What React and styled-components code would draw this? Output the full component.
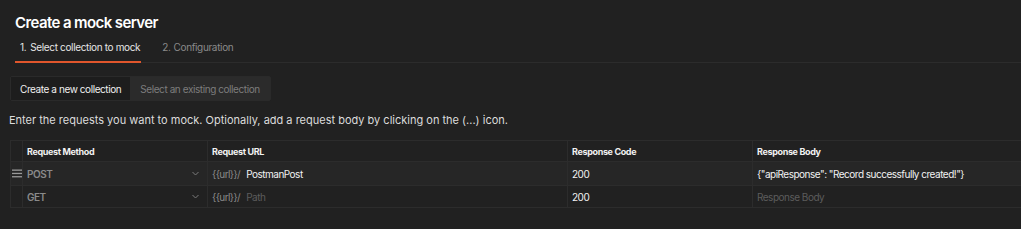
import React from "react";
import styled, { createGlobalStyle } from "styled-components";

const Global = createGlobalStyle`
  html, body { margin: 0; padding: 0; background: #212121; overflow: hidden; }
  body { font-family: Inter, "Noto Sans", "Liberation Sans", sans-serif; color: #e6e6e6; }
  * { box-sizing: border-box; }
`;

const Page = styled.div`
  padding: 13px 0 0 10px;
  width: 1021px;
  height: 229px;
`;

const Title = styled.h1`
  margin: 0 0 0 5px;
  font-size: 15px;
  line-height: 20px;
  font-weight: 600;
  letter-spacing: -0.6px;
  color: #ffffff;
`;

const TabBar = styled.div`
  display: flex;
  gap: 16px;
  margin-left: 5px;
  border-bottom: 1px solid #2c2c2c;
`;

const Tab = styled.div`
  display: flex;
  padding: 7px 1px 7px 5px;
  font-size: 10px;
  line-height: 14px;
  letter-spacing: -0.35px;
  color: ${(p) => (p.$active ? "#e6e6e6" : "#8a8a8a")};
  border-bottom: 2px solid ${(p) => (p.$active ? "#e0562c" : "transparent")};
  margin-bottom: -1px;
`;

const TabNum = styled.span`
  margin-right: ${(p) => p.$gap}px;
`;

const Segmented = styled.div`
  display: inline-flex;
  margin-top: 13px;
  border: 1px solid #2a2a2a;
  border-radius: 2px;
  background: #1d1d1d;
`;

const SegButton = styled.div`
  height: 23px;
  display: flex;
  align-items: center;
  padding: 0 ${(p) => (p.$active ? 9 : 10)}px;
  font-size: 10px;
  letter-spacing: -0.42px;
  color: ${(p) => (p.$active ? "#f0f0f0" : "#7d7d7d")};
  background: ${(p) => (p.$active ? "#1d1d1d" : "#2b2b2b")};
`;

const Description = styled.p`
  margin: 12px 0 0 -1px;
  font-size: 11px;
  line-height: 14px;
  color: #dcdcdc;
`;

const Table = styled.div`
  margin-top: 13px;
  display: grid;
  grid-template-columns: 12px 185px 360px 185px 1fr;
  border-top: 1px solid #2c2c2c;
  border-left: 1px solid #2c2c2c;
`;

const Row = styled.div`
  display: contents;
`;

const Cell = styled.div`
  height: ${(p) => p.$h || 22}px;
  display: flex;
  align-items: center;
  padding: 0 4px;
  font-size: ${(p) => (p.$head ? "9px" : "10px")};
  letter-spacing: ${(p) => (p.$head ? "-0.35px" : "-0.5px")};
  font-weight: ${(p) => (p.$head ? 700 : p.$method ? 600 : 400)};
  color: ${(p) => (p.$muted ? "#8a8a8a" : p.$placeholder ? "#5c5c5c" : "#f2f2f2")};
  background: ${(p) => (p.$hl ? "#262626" : "#212121")};
  border-bottom: 1px solid #2c2c2c;
  border-right: ${(p) => (p.$last ? "none" : "1px solid #2c2c2c")};
  white-space: nowrap;
  overflow: hidden;
`;

const HandleCell = styled(Cell)`
  padding: 0;
  justify-content: center;
`;

const MethodCell = styled(Cell)`
  justify-content: space-between;
  padding-right: 8px;
`;

const UrlPrefix = styled.span`
  color: #8a8a8a;
  margin-right: 6px;
  letter-spacing: -0.6px;
`;

const UrlValue = styled.span`
  color: ${(p) => (p.$placeholder ? "#5c5c5c" : "#f2f2f2")};
`;

const Chevron = () => (
  <svg width="7" height="5" viewBox="0 0 7 5" fill="none">
    <path d="M0.5 1 L3.5 4 L6.5 1" stroke="#7a7a7a" strokeWidth="1" />
  </svg>
);

const Handle = () => (
  <svg width="10" height="9" viewBox="0 0 10 9">
    <rect x="0" y="0.5" width="10" height="1.3" fill="#9a9a9a" />
    <rect x="0" y="3.8" width="10" height="1.3" fill="#9a9a9a" />
    <rect x="0" y="7.1" width="10" height="1.3" fill="#9a9a9a" />
  </svg>
);

const rows = [
  { method: "POST", path: "PostmanPost", code: "200", body: '{"apiResponse": "Record successfully created!"}', hl: true, h: 24 },
  { method: "GET", path: "", code: "200", body: "", hl: false, h: 22 },
];

export default function App() {
  return (
    <>
      <Global />
      <Page>
        <Title>Create a mock server</Title>
        <TabBar>
          <Tab $active>
            <TabNum $gap={4}>1.</TabNum>Select collection to mock
          </Tab>
          <Tab>
            <TabNum $gap={3}>2.</TabNum>Configuration
          </Tab>
        </TabBar>
        <Segmented>
          <SegButton $active>Create a new collection</SegButton>
          <SegButton>Select an existing collection</SegButton>
        </Segmented>
        <Description>
          Enter the requests you want to mock. Optionally, add a request body by clicking on the (...) icon.
        </Description>
        <Table>
          <Row>
            <HandleCell $head $h={21} />
            <Cell $head $h={21}>Request Method</Cell>
            <Cell $head $h={21}>Request URL</Cell>
            <Cell $head $h={21}>Response Code</Cell>
            <Cell $head $h={21} $last>Response Body</Cell>
          </Row>
          {rows.map((r) => (
            <Row key={r.method}>
              <HandleCell $hl={r.hl} $h={r.h}>{r.hl && <Handle />}</HandleCell>
              <MethodCell $hl={r.hl} $h={r.h} $muted $method>
                {r.method}
                <Chevron />
              </MethodCell>
              <Cell $hl={r.hl} $h={r.h}>
                <UrlPrefix>{"{{url}}/"}</UrlPrefix>
                <UrlValue $placeholder={!r.path}>{r.path || "Path"}</UrlValue>
              </Cell>
              <Cell $hl={r.hl} $h={r.h}>{r.code}</Cell>
              <Cell $hl={r.hl} $h={r.h} $last $placeholder={!r.body}>
                {r.body || "Response Body"}
              </Cell>
            </Row>
          ))}
        </Table>
      </Page>
    </>
  );
}
